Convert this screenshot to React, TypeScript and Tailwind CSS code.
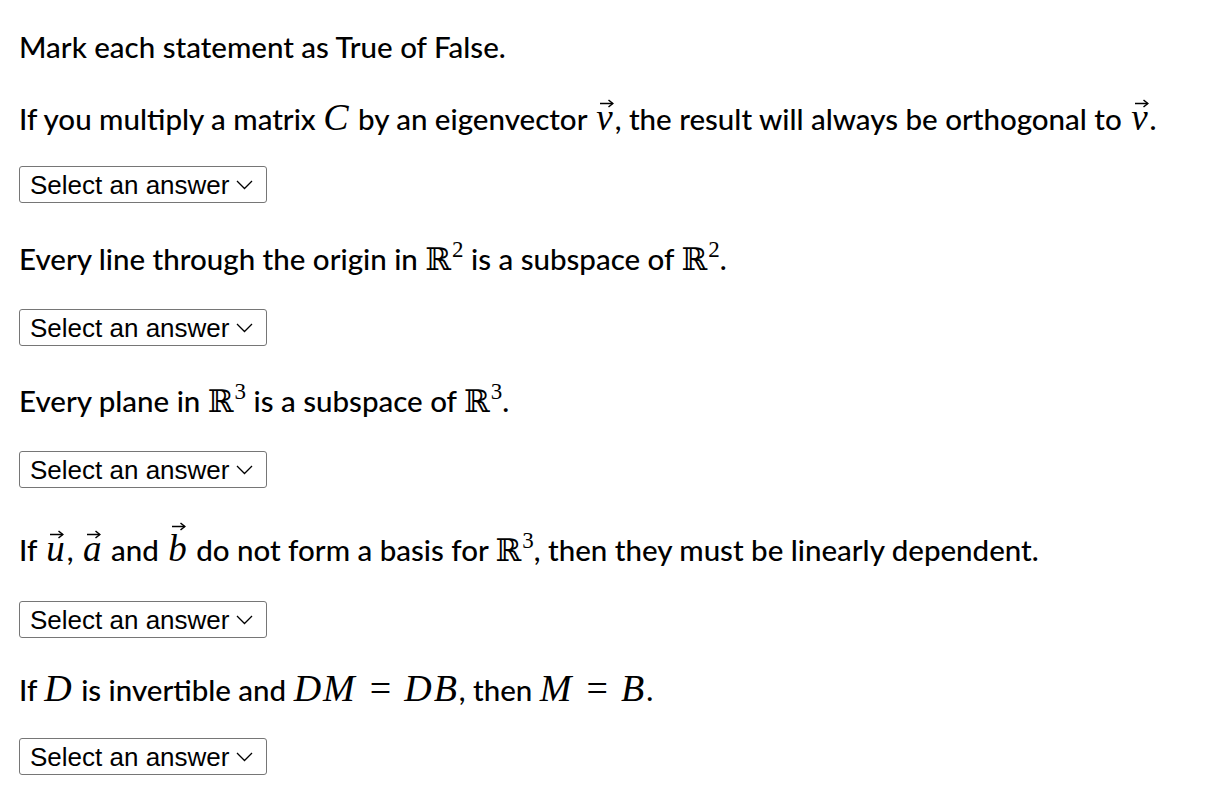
import React from "react";

const body = { fontFamily: "Lato, 'Open Sans', sans-serif" };
const serif = { fontFamily: "'Liberation Serif', 'DejaVu Serif', serif" };

function M({ children }: { children: React.ReactNode }) {
  return (
    <span className="italic text-[38px] tracking-[2px]" style={serif}>
      {children}
    </span>
  );
}

function Vec({ ch, tall }: { ch: string; tall?: boolean }) {
  return (
    <span className="relative inline-block px-[2px]">
      <span className="italic text-[37px]" style={serif}>
        {ch}
      </span>
      <svg
        className={"absolute left-[5px] " + (tall ? "top-[-7px]" : "top-[1px]")}
        width="15"
        height="9"
        viewBox="0 0 15 9"
      >
        <path d="M1 4.5 H13.5" stroke="black" strokeWidth="1.5" fill="none" />
        <path d="M9.5 1 L13.8 4.5 L9.5 8" stroke="black" strokeWidth="1.5" fill="none" />
      </svg>
    </span>
  );
}

function R({ n }: { n: string }) {
  return (
    <span className="inline-block">
      <span style={{ fontFamily: "'DejaVu Serif', serif" }} className="text-[31px]">
        ℝ
      </span>
      <span className="text-[23px] relative top-[-13px] ml-[1px]" style={serif}>
        {n}
      </span>
    </span>
  );
}

function Eq() {
  return (
    <span className="text-[38px] mx-[13px]" style={serif}>
      =
    </span>
  );
}

function Sel() {
  return (
    <div
      className="flex items-center w-[248px] h-[37px] border border-[#767676] rounded-[3px] pl-[10px] text-[26px] text-black bg-white"
      style={{ fontFamily: "'Liberation Sans', Arial, sans-serif" }}
    >
      <span className="leading-none">Select an answer</span>
      <svg className="ml-[7px]" width="17" height="10" viewBox="0 0 17 10">
        <path d="M1 1 L8.5 8.5 L16 1" stroke="black" strokeWidth="1.3" fill="none" />
      </svg>
    </div>
  );
}

export default function App() {
  return (
    <div className="bg-white w-[1212px] h-[794px] text-black pl-[19px] pt-[27px] font-medium" style={body}>
      <p className="text-[29.5px] leading-[40px] h-[40px]">Mark each statement as True of False.</p>
      <p className="text-[29.5px] leading-[40px] h-[40px] mt-[30px] whitespace-nowrap">
        If you multiply a matrix <M>C</M> by an eigenvector <Vec ch="v" />, the result will always be orthogonal to{" "}
        <Vec ch="v" />.
      </p>
      <div className="mt-[29px]">
        <Sel />
      </div>
      <p className="text-[29.5px] leading-[40px] h-[40px] mt-[36px] whitespace-nowrap">
        Every line through the origin in <R n="2" /> is a subspace of <R n="2" />.
      </p>
      <div className="mt-[30px]">
        <Sel />
      </div>
      <p className="text-[29.5px] leading-[40px] h-[40px] mt-[35px] whitespace-nowrap">
        Every plane in <R n="3" /> is a subspace of <R n="3" />.
      </p>
      <div className="mt-[30px]">
        <Sel />
      </div>
      <p className="text-[29.5px] leading-[40px] h-[40px] mt-[41px] whitespace-nowrap">
        If <Vec ch="u" />, <Vec ch="a" /> and <Vec ch="b" tall /> do not form a basis for <R n="3" />, then they must
        be linearly dependent.
      </p>
      <div className="mt-[32px]">
        <Sel />
      </div>
      <p className="text-[29.5px] leading-[40px] h-[40px] mt-[30px] whitespace-nowrap">
        If <M>D</M> is invertible and <M>DM</M>
        <Eq />
        <M>DB</M>, then <M>M</M>
        <Eq />
        <M>B</M>.
      </p>
      <div className="mt-[30px]">
        <Sel />
      </div>
    </div>
  );
}
